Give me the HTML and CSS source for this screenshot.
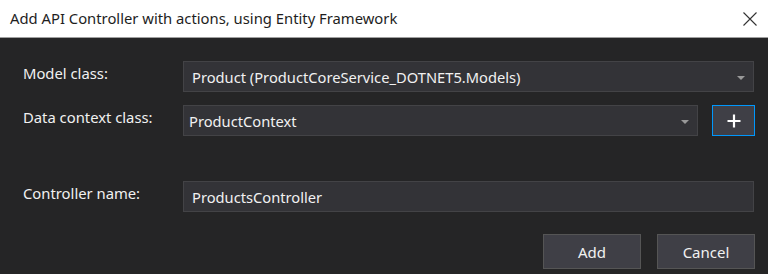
FILE: index.html
```html
<!DOCTYPE html>
<html lang="en">
<head>
    <meta charset="UTF-8">
    <meta name="viewport" content="width=device-width, initial-scale=1.0">
    <title>Add API Controller</title>
    <link rel="stylesheet" href="styles.css">
</head>
<body>
    <div class="titlebar">
        <span class="title">Add API Controller with actions, using Entity Framework</span>
        <button class="close" aria-label="Close">
            <svg width="16" height="16" viewBox="0 0 16 16">
                <path d="M1.5 1.5 L14.5 14.5 M14.5 1.5 L1.5 14.5" stroke="#333" stroke-width="1.1" fill="none"/>
            </svg>
        </button>
    </div>

    <div class="dialog">
        <div class="form-row">
            <label class="label">Model class:</label>
            <div class="combo">
                <span class="combo-text">Product (ProductCoreService_DOTNET5.Models)</span>
                <span class="arrow"></span>
            </div>
        </div>

        <div class="form-row">
            <label class="label">Data context class:</label>
            <div class="combo combo-edit">
                <span class="combo-text">ProductContext</span>
                <span class="arrow"></span>
            </div>
            <button class="plus" aria-label="Add data context">
                <svg width="14" height="14" viewBox="0 0 14 14">
                    <path d="M7 0.5 V13.5 M0.5 7 H13.5" stroke="#fff" stroke-width="2.2" fill="none"/>
                </svg>
            </button>
        </div>

        <div class="form-row name-row">
            <label class="label">Controller name:</label>
            <div class="textbox">ProductsController</div>
        </div>

        <div class="actions">
            <button class="btn">Add</button>
            <button class="btn">Cancel</button>
        </div>
    </div>
</body>
</html>
```

FILE: styles.css
```css
body {
    margin: 0;
    font-family: "Noto Sans", "Open Sans", sans-serif;
    background-color: #252526;
    color: #f1f1f1;
}
.titlebar {
    height: 37px;
    background-color: #fff;
    border-bottom: 1px solid #a0a0a0;
    display: flex;
    align-items: center;
    justify-content: space-between;
    padding: 0 10px;
}
.title {
    color: #1e1e1e;
    font-size: 14.8px;
    margin-top: -1px;
}
.close {
    background: none;
    border: none;
    padding: 0;
    width: 16px;
    height: 16px;
    display: flex;
}
.dialog {
    padding: 23px 14px 0 23px;
    display: flex;
    flex-direction: column;
}
.form-row {
    display: flex;
    align-items: flex-start;
    height: 31px;
    margin-bottom: 13px;
}
.name-row {
    margin-top: 32px;
    margin-bottom: 22px;
}
.label {
    width: 160px;
    font-size: 14.8px;
    padding-top: 2px;
}
.combo, .textbox {
    flex: 1;
    box-sizing: border-box;
    height: 31px;
    background-color: #333337;
    border: 1px solid #434346;
    display: flex;
    align-items: center;
    padding: 0 8px;
    font-size: 14.7px;
}
.combo-edit {
    padding-left: 5px;
}
.combo-text {
    flex: 1;
}
.arrow {
    width: 0;
    height: 0;
    border-left: 4px solid transparent;
    border-right: 4px solid transparent;
    border-top: 4px solid #999;
    margin-top: 2px;
}
.plus {
    box-sizing: border-box;
    width: 43px;
    height: 31px;
    margin-left: 14px;
    margin-right: -1px;
    background-color: #3f3f46;
    border: 1px solid #0097fb;
    display: flex;
    align-items: center;
    justify-content: center;
    padding: 0;
}
.actions {
    display: flex;
    justify-content: flex-end;
    gap: 16px;
    margin-right: -1px;
}
.btn {
    box-sizing: border-box;
    width: 98px;
    height: 35px;
    background-color: #3f3f46;
    border: 1px solid #555555;
    color: #f1f1f1;
    font-family: "Noto Sans", "Open Sans", sans-serif;
    font-size: 15px;
    padding: 0;
}
```
